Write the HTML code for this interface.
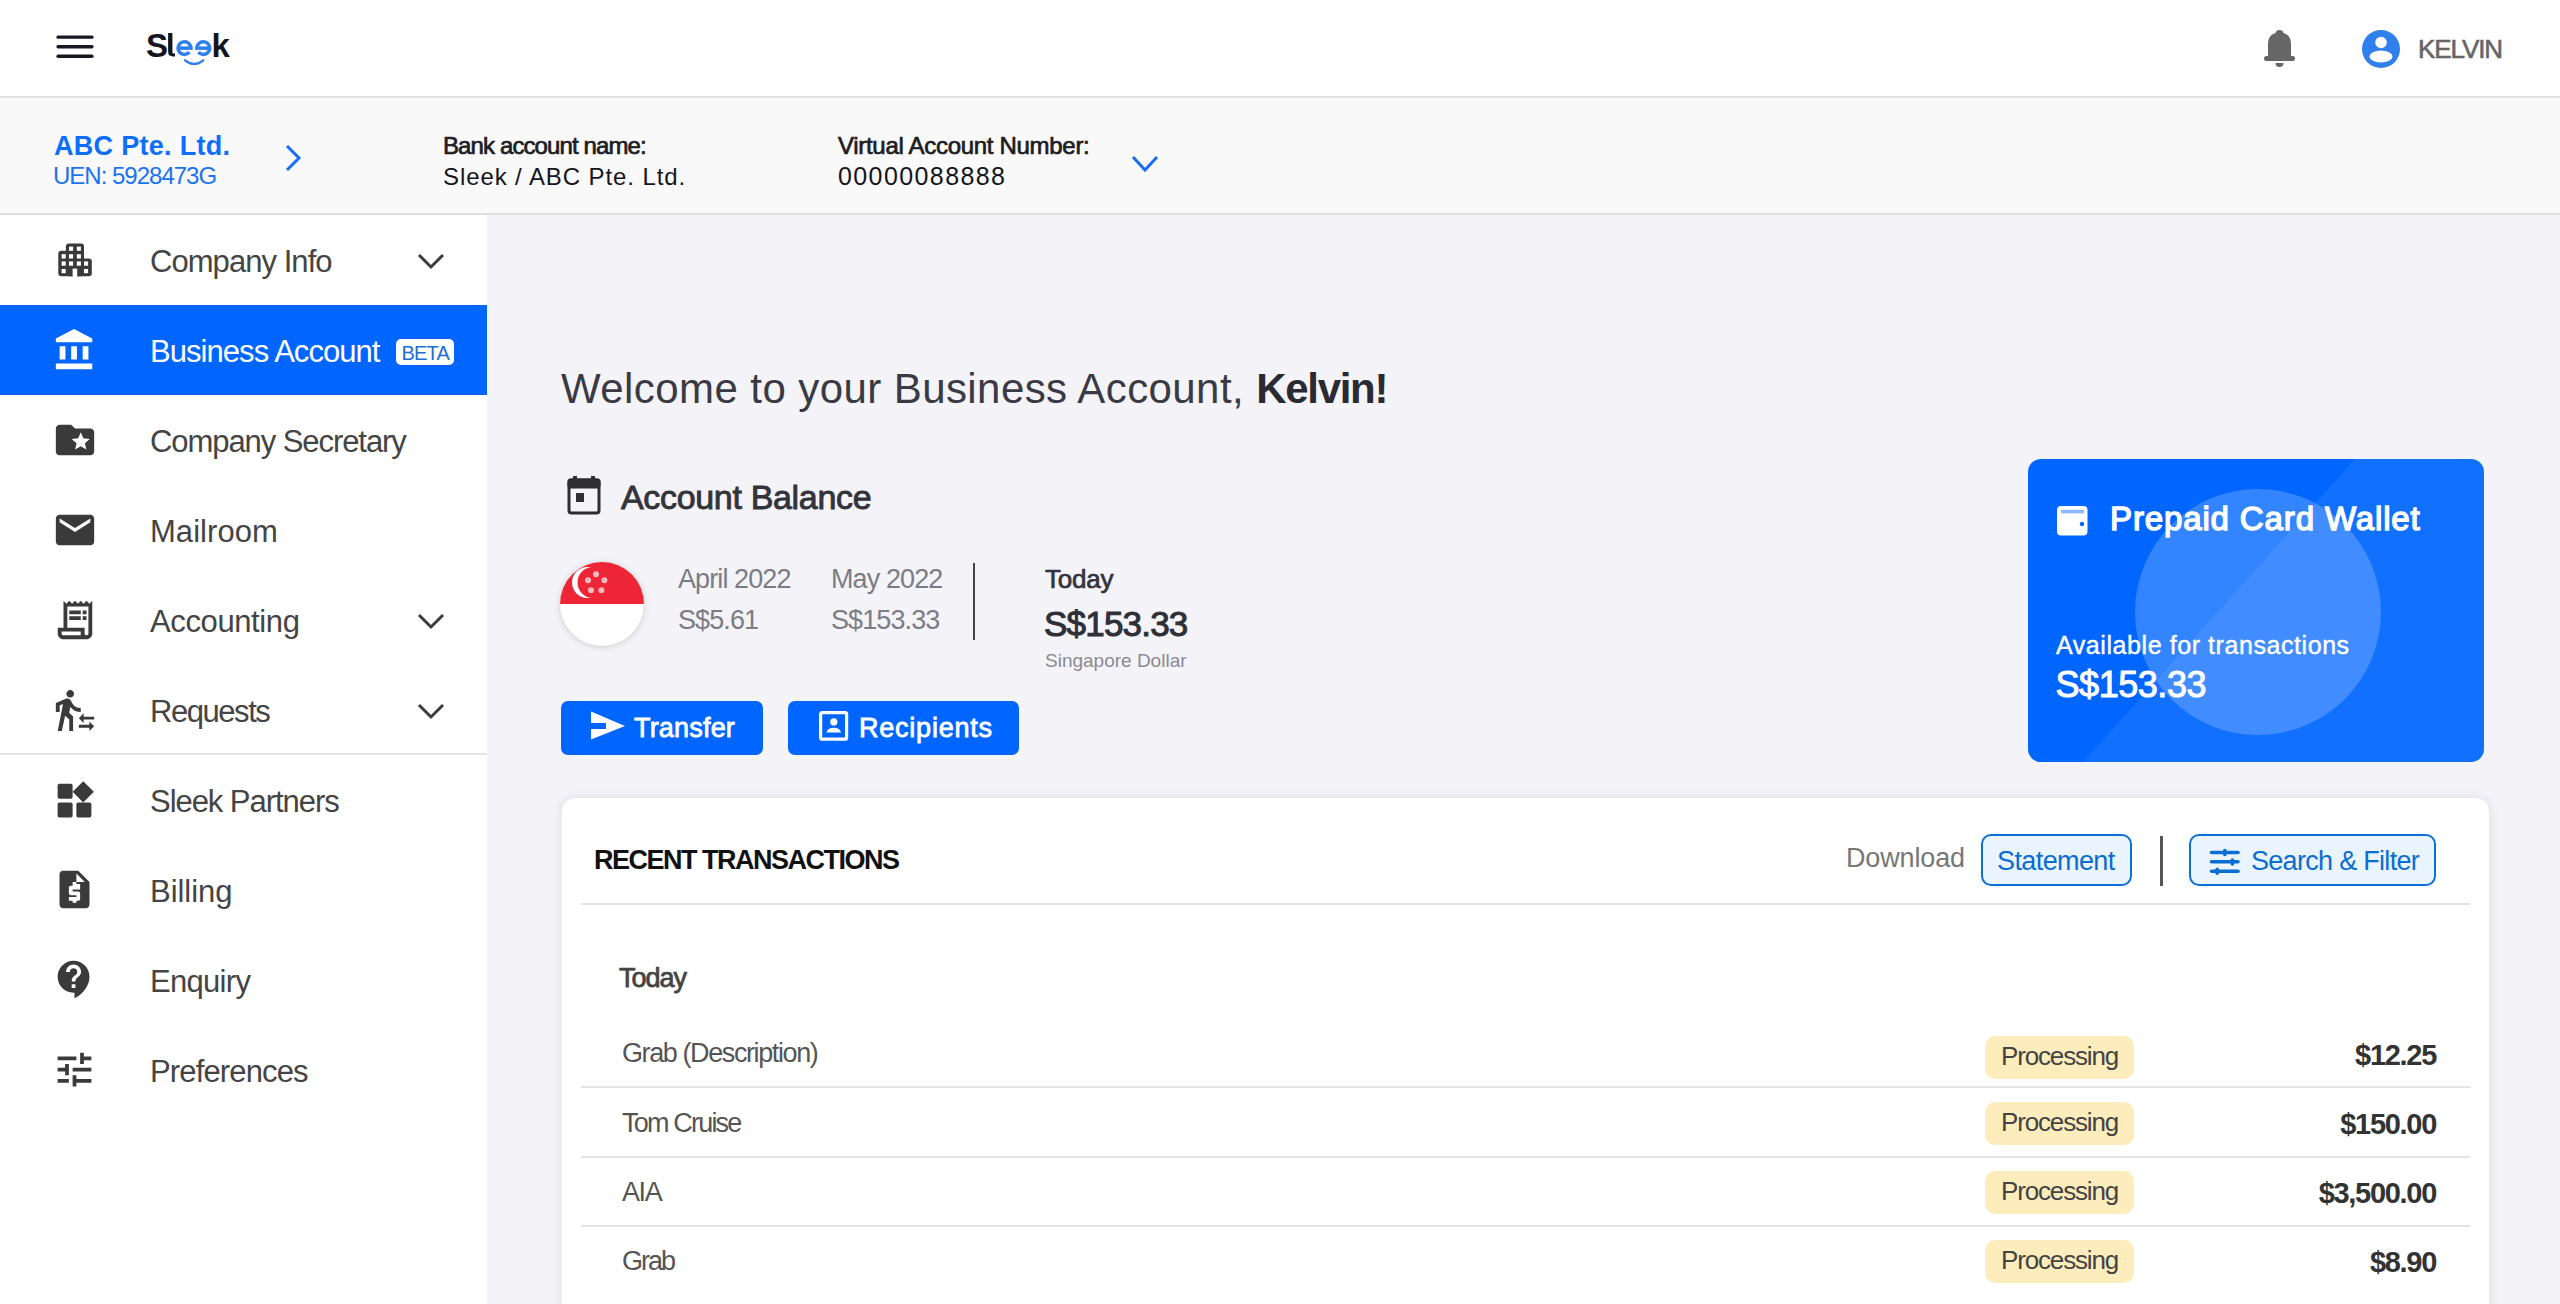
<!DOCTYPE html>
<html><head><meta charset="utf-8">
<style>
*{box-sizing:border-box;margin:0;padding:0}
html,body{width:2560px;height:1304px;overflow:hidden;background:#f4f3f8;font-family:"Liberation Sans",sans-serif;position:relative}
.a{position:absolute}
.t{position:absolute;line-height:0;white-space:nowrap}
svg{position:absolute;display:block}
#hdr{left:0;top:0;width:2560px;height:96px;background:#fff}
#hdrb{left:0;top:96px;width:2560px;height:2px;background:#e2e2e2}
#bar{left:0;top:98px;width:2560px;height:116px;background:#f9f9fa}
#barb{left:0;top:213px;width:2560px;height:2px;background:#dedede}
#side{left:0;top:215px;width:487px;height:1089px;background:#fff}
.nav{font-size:31px;color:#444;letter-spacing:-0.95px}
.chev{width:30px;height:18px}
</style></head><body>
<!-- header -->
<div class="a" id="hdr"></div>
<div class="a" id="hdrb"></div>
<svg style="left:50px;top:30px" width="50" height="34" viewBox="0 0 50 34"><g fill="#181824"><rect x="6.4" y="5.5" width="37.2" height="3.3" rx="1.6"/><rect x="6.4" y="15.1" width="37.2" height="3.3" rx="1.6"/><rect x="6.4" y="24.6" width="37.2" height="3.3" rx="1.6"/></g></svg>
<div class="t" style="left:146px;top:45.6px;font-size:33px;font-weight:700;color:#15151f">S</div>
<div class="t" style="left:211.5px;top:45.6px;font-size:33px;font-weight:700;color:#15151f">k</div>
<svg style="left:140px;top:25px" width="100" height="45" viewBox="0 0 100 45"><path d="M28.1 8 H32.4 V27.6 Q32.4 28.6 33.4 28.6 H35 V31.4 H33 Q28.1 31.4 28.1 26.5 Z" fill="#15151f"/><g fill="none" stroke="#2f80ed" stroke-width="3.4"><path d="M49.4 27.1 A6.35 6.35 0 1 1 50.7 24.3"/><path d="M58.4 27.1 A6.35 6.35 0 1 0 57.1 24.3"/></g><rect x="37.5" y="21.4" width="15" height="3.5" fill="#2f80ed"/><rect x="55.3" y="21.4" width="15" height="3.5" fill="#2f80ed"/><path d="M45 35.3 Q54.2 42.5 63.3 35.3" fill="none" stroke="#2f80ed" stroke-width="2.3" stroke-linecap="round"/></svg>
<!-- bell -->
<svg style="left:2264px;top:30px" width="32" height="38" viewBox="0 0 32 38"><circle cx="15.5" cy="4" r="4" fill="#666"/><path d="M4 29 V14 C4 6 9 2.5 15.5 2.5 C22 2.5 27 6 27 14 V29 Z" fill="#666"/><rect x="0" y="26" width="31" height="5" rx="2.5" fill="#666"/><path d="M11.5 33 H19.5 A4 4 0 0 1 11.5 33 Z" fill="#666"/></svg>
<!-- user -->
<svg style="left:2362px;top:30px" width="38" height="38" viewBox="0 0 38 38"><circle cx="19" cy="19" r="19" fill="#2f80ed"/><circle cx="19" cy="12.5" r="5.8" fill="#fff"/><ellipse cx="19" cy="26.5" rx="11.5" ry="6" fill="#fff"/></svg>
<div class="t" style="left:2418px;top:49px;font-size:26px;color:#666;-webkit-text-stroke:0.6px #666;letter-spacing:-1.1px">KELVIN</div>

<!-- company bar -->
<div class="a" id="bar"></div>
<div class="a" id="barb"></div>
<div class="t" style="left:54px;top:145.6px;font-size:27px;font-weight:700;color:#0d6efd;letter-spacing:0.3px">ABC Pte. Ltd.</div>
<div class="t" style="left:53px;top:175.7px;font-size:24px;color:#1a73f0;letter-spacing:-1px">UEN: 5928473G</div>
<svg style="left:284px;top:143px" width="18" height="30" viewBox="0 0 18 30"><path d="M3 3 L15 15 L3 27" stroke="#1a6ef5" stroke-width="3" fill="none"/></svg>
<div class="t" style="left:443px;top:145.7px;font-size:24px;font-weight:400;-webkit-text-stroke:0.7px #1c1c24;color:#1c1c24;letter-spacing:-0.89px">Bank account name:</div>
<div class="t" style="left:443px;top:176.7px;font-size:24px;color:#15151c;letter-spacing:0.9px">Sleek / ABC Pte. Ltd.</div>
<div class="t" style="left:838px;top:145.7px;font-size:24px;font-weight:400;-webkit-text-stroke:0.7px #1c1c24;color:#1c1c24;letter-spacing:-0.3px">Virtual Account Number:</div>
<div class="t" style="left:838px;top:176.3px;font-size:25px;color:#15151c;letter-spacing:1.4px">00000088888</div>
<svg style="left:1130px;top:154px" width="30" height="20" viewBox="0 0 30 20"><path d="M3 3 L15 16 L27 3" stroke="#1a6ef5" stroke-width="3" fill="none"/></svg>

<!-- sidebar -->
<div class="a" id="side"></div>
<div class="a" style="left:0;top:305px;width:487px;height:90px;background:#0066ff"></div>
<div class="a" style="left:0;top:753px;width:487px;height:2px;background:#e4e4e4"></div>

<div class="t nav" style="left:150px;top:261.6px">Company Info</div>
<div class="t nav" style="left:150px;top:351.6px;color:#fff">Business Account</div>
<div class="a" style="left:395.5px;top:339px;width:58px;height:26px;background:#fff;border-radius:5px"></div>
<div class="t" style="left:401.5px;top:353px;font-size:20px;color:#1c6fd4;letter-spacing:-0.8px">BETA</div>
<div class="t nav" style="left:150px;top:441.6px;letter-spacing:-1.07px">Company Secretary</div>
<div class="t nav" style="left:150px;top:531.6px;letter-spacing:0.05px">Mailroom</div>
<div class="t nav" style="left:150px;top:621.6px;letter-spacing:-0.38px">Accounting</div>
<div class="t nav" style="left:150px;top:711.6px;letter-spacing:-1.45px">Requests</div>
<div class="t nav" style="left:150px;top:801.6px;letter-spacing:-1.05px">Sleek Partners</div>
<div class="t nav" style="left:150px;top:891.6px;letter-spacing:-0.05px">Billing</div>
<div class="t nav" style="left:150px;top:981.6px;letter-spacing:-0.7px">Enquiry</div>
<div class="t nav" style="left:150px;top:1071.6px;letter-spacing:-0.86px">Preferences</div>

<svg class="chev" style="left:416px;top:252px" viewBox="0 0 30 18"><path d="M3 3 L15 15 L27 3" stroke="#3c3c3c" stroke-width="3" fill="none"/></svg>
<svg class="chev" style="left:416px;top:612px" viewBox="0 0 30 18"><path d="M3 3 L15 15 L27 3" stroke="#3c3c3c" stroke-width="3" fill="none"/></svg>
<svg class="chev" style="left:416px;top:702px" viewBox="0 0 30 18"><path d="M3 3 L15 15 L27 3" stroke="#3c3c3c" stroke-width="3" fill="none"/></svg>



<!-- sidebar icons -->
<svg style="left:50px;top:236px" width="50" height="46" viewBox="0 0 50 46"><g fill="#3a3a3a"><rect x="15.9" y="7.4" width="18.1" height="32.8" rx="3"/><rect x="8.3" y="14.8" width="22" height="25.4" rx="3"/><rect x="20" y="22.4" width="21.8" height="17.8" rx="3"/></g><g fill="#fff"><rect x="22.6" y="32.6" width="4.6" height="9"/><rect x="19" y="10.6" width="4.1" height="4.2"/><rect x="26.8" y="10.6" width="4.1" height="4.2"/><rect x="11.6" y="18.2" width="4.1" height="4.3"/><rect x="19" y="18.2" width="4.1" height="4.3"/><rect x="26.8" y="18.2" width="4.1" height="4.3"/><rect x="11.6" y="25.4" width="4.1" height="4.3"/><rect x="19" y="25.4" width="4.1" height="4.3"/><rect x="26.8" y="25.4" width="4.1" height="4.3"/><rect x="34" y="25.4" width="4.1" height="4.3"/><rect x="11.6" y="33" width="4.1" height="4.2"/><rect x="34" y="33" width="4.1" height="4.2"/></g></svg>
<svg style="left:52px;top:327px" width="46" height="46" viewBox="0 0 24 24"><path fill="#fff" d="M4 10v7h3v-7H4zm6 0v7h3v-7h-3zM2 22h19v-3H2v3zm14-12v7h3v-7h-3zm-4.5-9L2 6v2h19V6l-9.5-5z"/></svg>
<svg style="left:52px;top:417px" width="46" height="46" viewBox="0 0 24 24"><path fill="#3a3a3a" d="M20 6h-8l-2-2H4c-1.1 0-1.99.9-1.99 2L2 18c0 1.1.9 2 2 2h16c1.1 0 2-.9 2-2V8c0-1.1-.9-2-2-2zm-2.06 11L15 15.28 12.06 17l.78-3.33-2.59-2.24 3.41-.29L15 8l1.34 3.14 3.41.29-2.59 2.24.78 3.33z"/></svg>
<svg style="left:52px;top:507px" width="46" height="46" viewBox="0 0 24 24"><path fill="#3a3a3a" d="M20 4H4c-1.1 0-1.99.9-1.99 2L2 18c0 1.1.9 2 2 2h16c1.1 0 2-.9 2-2V6c0-1.1-.9-2-2-2zm0 4l-8 5-8-5V6l8 5 8-5v2z"/></svg>
<svg style="left:52px;top:597px" width="46" height="46" viewBox="0 0 24 24"><path fill="#3a3a3a" d="M19.5 3.5L18 2l-1.5 1.5L15 2l-1.5 1.5L12 2l-1.5 1.5L9 2 7.5 3.5 6 2v14H3v3c0 1.66 1.34 3 3 3h12c1.66 0 3-1.34 3-3V2l-1.5 1.5zM15 20H6c-.55 0-1-.45-1-1v-1h10v2zm4-1c0 .55-.45 1-1 1s-1-.45-1-1v-3H8V5h11v14z"/><path fill="#3a3a3a" d="M9 7h6v2H9zM16 7h2v2h-2zM9 10h6v2H9zM16 10h2v2h-2z"/></svg>
<svg style="left:52px;top:687px" width="46" height="46" viewBox="0 0 24 24"><path fill="#3a3a3a" d="M16.49 15.5v-1.75L14 16.25l2.49 2.5V17H22v-1.5zm3.02 4.25H14v1.5h5.51V23L22 20.5 19.51 18zM9.5 5.5c1.1 0 2-.9 2-2s-.9-2-2-2-2 .9-2 2 .9 2 2 2zM5.75 8.9L3 23h2.1l1.75-8L9 17v6h2v-7.55L8.95 13.4l.6-3C10.85 12 12.8 13 15 13v-2c-1.85 0-3.45-1-4.35-2.45l-.95-1.6C9.35 6.35 8.7 6 8 6c-.25 0-.5.05-.75.15L2 8.3V13h2V9.65l1.75-.75"/></svg>
<svg style="left:52px;top:778px" width="45" height="45" viewBox="0 0 24 24"><g fill="#3a3a3a"><rect x="13" y="13" width="8" height="8" rx="1"/><rect x="3" y="13" width="8" height="8" rx="1"/><rect x="3" y="3" width="8" height="8" rx="1"/><path d="M16.66 1.69L11 7.34 16.66 13l5.66-5.66z"/></g></svg>
<svg style="left:52px;top:867px" width="45" height="45" viewBox="0 0 24 24"><path fill="#3a3a3a" d="M14 2H6c-1.1 0-1.99.9-1.99 2L4 20c0 1.1.89 2 1.99 2H18c1.1 0 2-.9 2-2V8l-6-6zm1 10h-4v1h3c.55 0 1 .45 1 1v3c0 .55-.45 1-1 1h-1v1h-2v-1H9v-2h4v-1h-3c-.55 0-1-.45-1-1v-3c0-.55.45-1 1-1h1V8h2v1h2v2zm-2-4V3.5L17.5 8H13z"/></svg>
<svg style="left:52px;top:957px" width="45" height="45" viewBox="0 0 24 24"><path fill="#3a3a3a" d="M11.5 2C6.81 2 3 5.81 3 10.5S6.81 19 11.5 19h.5v3c4.86-2.34 8-7 8-11.5C20 5.81 16.19 2 11.5 2zm1 14.5h-2v-2h2v2zm0-3.5h-2c0-3.25 3-3 3-5 0-1.1-.9-2-2-2s-2 .9-2 2h-2c0-2.21 1.79-4 4-4s4 1.79 4 4c0 2.5-3 2.75-3 5z"/></svg>
<svg style="left:52px;top:1047px" width="45" height="45" viewBox="0 0 24 24"><path fill="#3a3a3a" d="M3 17v2h6v-2H3zM3 5v2h10V5H3zm10 16v-2h8v-2h-8v-2h-2v6h2zM7 9v2H3v2h4v2h2V9H7zm14 4v-2H11v2h10zm-6-4h2V7h4V5h-4V3h-2v6z"/></svg>

<!-- welcome -->
<div class="t" style="left:561px;top:389px;font-size:42px;color:#3a3a44;letter-spacing:0.42px">Welcome to your Business Account, <b style="color:#2a2a33;letter-spacing:-1.3px">Kelvin!</b></div>
<svg style="left:566px;top:474px" width="37" height="42" viewBox="0 0 37 42"><rect x="3" y="6" width="30" height="33" rx="2.5" fill="none" stroke="#2e2e33" stroke-width="3"/><rect x="1.5" y="4.5" width="33" height="10" rx="3" fill="#2e2e33"/><rect x="7" y="2" width="4" height="4" fill="#2e2e33"/><rect x="25" y="2" width="4" height="4" fill="#2e2e33"/><rect x="10" y="19" width="8" height="9" fill="#2e2e33"/></svg>
<div class="t" style="left:621px;top:496.6px;font-size:34px;font-weight:400;-webkit-text-stroke:0.9px #33333c;color:#33333c;letter-spacing:-0.33px">Account Balance</div>

<!-- flag -->
<div class="a" style="left:560px;top:562px;width:84px;height:84px;border-radius:50%;background:#fff;box-shadow:0 1px 7px rgba(0,0,0,0.16)"></div>
<svg style="left:560px;top:562px" width="84" height="84" viewBox="0 0 84 84"><defs><clipPath id="fc"><circle cx="42" cy="42" r="42"/></clipPath><mask id="cm"><rect x="0" y="0" width="84" height="84" fill="#fff"/><circle cx="33" cy="20.5" r="15.5" fill="#000"/></mask></defs><g clip-path="url(#fc)"><rect x="0" y="0" width="84" height="42" fill="#ee2536"/><circle cx="27.5" cy="20.5" r="15.5" fill="#fff" mask="url(#cm)"/><g fill="#f7b9be"><circle cx="36" cy="12.2" r="3"/><circle cx="28" cy="18.3" r="3"/><circle cx="44.4" cy="18.3" r="3"/><circle cx="31" cy="28.3" r="3"/><circle cx="41.4" cy="28.3" r="3"/></g></g></svg>
<div class="t" style="left:678px;top:579.3px;font-size:27px;color:#7c7c84;letter-spacing:-0.9px">April 2022</div>
<div class="t" style="left:678px;top:619.6px;font-size:27px;color:#7c7c84;letter-spacing:-0.9px">S$5.61</div>
<div class="t" style="left:831px;top:579.3px;font-size:27px;color:#7c7c84;letter-spacing:-0.9px">May 2022</div>
<div class="t" style="left:831px;top:619.6px;font-size:27px;color:#7c7c84;letter-spacing:-0.9px">S$153.33</div>
<div class="a" style="left:972.5px;top:563px;width:2.5px;height:77px;background:#444"></div>
<div class="t" style="left:1045px;top:578.6px;font-size:26px;font-weight:400;-webkit-text-stroke:0.7px #33333a;color:#33333a;letter-spacing:-0.2px">Today</div>
<div class="t" style="left:1044px;top:623.6px;font-size:35px;font-weight:400;-webkit-text-stroke:1px #2f2f38;color:#2f2f38;letter-spacing:-0.8px">S$153.33</div>
<div class="t" style="left:1045px;top:661.4px;font-size:19px;color:#8a8a92;letter-spacing:0px">Singapore Dollar</div>

<!-- buttons -->
<div class="a" style="left:561px;top:701px;width:202px;height:54px;background:#0066ff;border-radius:7px"></div>
<svg style="left:591px;top:711px" width="35" height="29" viewBox="0 0 35 29"><path d="M0 0.5 L34 15 L0 28.5 V18 H15 V12 H0 Z" fill="#fff"/></svg>
<div class="t" style="left:634px;top:727.6px;font-size:27px;font-weight:400;-webkit-text-stroke:0.8px #fff;color:#fff;letter-spacing:0.19px">Transfer</div>
<div class="a" style="left:788px;top:701px;width:231px;height:54px;background:#0066ff;border-radius:7px"></div>
<svg style="left:819px;top:711px" width="30" height="30" viewBox="0 0 30 30"><rect x="1.6" y="1.6" width="26" height="26.6" rx="1.5" fill="none" stroke="#fff" stroke-width="3.2"/><circle cx="14.8" cy="10.9" r="3.6" fill="#fff"/><path d="M7.5 21.5 Q8.5 16.8 14.8 16.8 Q21 16.8 22 21.5 Z" fill="#fff"/></svg>
<div class="t" style="left:859px;top:727.6px;font-size:27px;font-weight:400;-webkit-text-stroke:0.8px #fff;color:#fff;letter-spacing:0.77px">Recipients</div>

<!-- prepaid card -->
<div class="a" style="left:2028px;top:459px;width:456px;height:303px;border-radius:13px;overflow:hidden;background:#0066ff">
  <svg style="left:0;top:0" width="456" height="303" viewBox="0 0 456 303"><polygon points="55,303 327,0 456,0 456,303" fill="rgba(255,255,255,0.07)"/></svg>
  <div class="a" style="left:107px;top:30px;width:246px;height:246px;border-radius:50%;background:rgba(255,255,255,0.2)"></div>
</div>
<svg style="left:2056px;top:505px" width="33" height="32" viewBox="0 0 33 32"><rect x="1" y="1" width="30.5" height="29.6" rx="4" fill="#fff"/><rect x="5" y="4.8" width="23" height="3.5" fill="rgba(0,102,255,0.45)"/><circle cx="26" cy="19" r="2.2" fill="#0066ff"/></svg>
<div class="t" style="left:2110px;top:519.3px;font-size:33px;font-weight:400;-webkit-text-stroke:1.4px #fff;color:#fff;letter-spacing:0.87px">Prepaid Card Wallet</div>
<div class="t" style="left:2056px;top:645.3px;font-size:25px;color:#fff;-webkit-text-stroke:0.4px #fff;letter-spacing:0.57px">Available for transactions</div>
<div class="t" style="left:2055.5px;top:684.5px;font-size:36px;font-weight:400;-webkit-text-stroke:1px #fff;color:#fff;letter-spacing:-0.45px">S$153.33</div>

<!-- transactions card -->
<div class="a" style="left:562px;top:798px;width:1927px;height:560px;background:#fff;border-radius:13px;box-shadow:0 0 10px 1px rgba(40,40,60,0.10)"></div>
<div class="t" style="left:594px;top:859.6px;font-size:27px;font-weight:700;color:#111;letter-spacing:-1.5px">RECENT TRANSACTIONS</div>
<div class="t" style="left:1846px;top:858.2px;font-size:27px;color:#777;letter-spacing:-0.15px">Download</div>
<div class="a" style="left:1981px;top:834px;width:151px;height:52px;border:2px solid #0b6fd8;border-radius:10px;background:#e9f4fe"></div>
<div class="t" style="left:1997px;top:860.6px;font-size:27px;color:#0b6dd2;letter-spacing:-0.6px">Statement</div>
<div class="a" style="left:2160px;top:836px;width:3px;height:50px;background:#555"></div>
<div class="a" style="left:2189px;top:834px;width:247px;height:52px;border:2px solid #0b6fd8;border-radius:10px;background:#e9f4fe"></div>
<svg style="left:2208px;top:847px" width="34" height="30" viewBox="0 0 34 30"><g stroke="#0b6dd2" stroke-width="3.6" stroke-linecap="round"><line x1="3.6" y1="5.5" x2="30" y2="5.5"/><line x1="3.6" y1="14.8" x2="30" y2="14.8"/><line x1="3.6" y1="24.2" x2="30" y2="24.2"/><line x1="16.8" y1="3.6" x2="16.8" y2="7.4"/><line x1="24.4" y1="13" x2="24.4" y2="17"/><line x1="9.2" y1="22.2" x2="9.2" y2="26.2"/></g></svg>
<div class="t" style="left:2251px;top:860.6px;font-size:27px;color:#0b6dd2;letter-spacing:-0.7px">Search &amp; Filter</div>
<div class="a" style="left:581px;top:903px;width:1889px;height:2px;background:#e2e2e2"></div>

<div class="t" style="left:619px;top:977.6px;font-size:27px;font-weight:400;-webkit-text-stroke:0.75px #444;color:#444;letter-spacing:-1px">Today</div>

<div class="t" style="left:622px;top:1053px;font-size:27px;color:#555;letter-spacing:-1.4px">Grab (Description)</div>
<div class="t" style="left:622px;top:1123px;font-size:27px;color:#555;letter-spacing:-1.8px">Tom Cruise</div>
<div class="t" style="left:622px;top:1191.6px;font-size:27px;color:#555;letter-spacing:-1.4px">AIA</div>
<div class="t" style="left:622px;top:1260.6px;font-size:27px;color:#555;letter-spacing:-2px">Grab</div>
<div class="a" style="left:581px;top:1086px;width:1889px;height:2px;background:#e4e4e4"></div>
<div class="a" style="left:581px;top:1156px;width:1889px;height:2px;background:#e4e4e4"></div>
<div class="a" style="left:581px;top:1225px;width:1889px;height:2px;background:#e4e4e4"></div>

<div class="a" style="left:1985px;top:1036px;width:149px;height:43px;background:#fdedbd;border-radius:10px"></div>
<div class="a" style="left:1985px;top:1102px;width:149px;height:43px;background:#fdedbd;border-radius:10px"></div>
<div class="a" style="left:1985px;top:1171px;width:149px;height:43px;background:#fdedbd;border-radius:10px"></div>
<div class="a" style="left:1985px;top:1240px;width:149px;height:43px;background:#fdedbd;border-radius:10px"></div>
<div class="t" style="left:2001px;top:1056px;font-size:26px;color:#444;letter-spacing:-1.15px">Processing</div>
<div class="t" style="left:2001px;top:1122px;font-size:26px;color:#444;letter-spacing:-1.15px">Processing</div>
<div class="t" style="left:2001px;top:1191px;font-size:26px;color:#444;letter-spacing:-1.15px">Processing</div>
<div class="t" style="left:2001px;top:1260px;font-size:26px;color:#444;letter-spacing:-1.15px">Processing</div>

<div class="t" style="right:124px;top:1054.5px;font-size:29px;font-weight:700;color:#333;letter-spacing:-1.3px">$12.25</div>
<div class="t" style="right:124px;top:1124px;font-size:29px;font-weight:700;color:#333;letter-spacing:-1.3px">$150.00</div>
<div class="t" style="right:124px;top:1193px;font-size:29px;font-weight:700;color:#333;letter-spacing:-1.3px">$3,500.00</div>
<div class="t" style="right:124px;top:1262px;font-size:29px;font-weight:700;color:#333;letter-spacing:-1.3px">$8.90</div>

</body></html>
